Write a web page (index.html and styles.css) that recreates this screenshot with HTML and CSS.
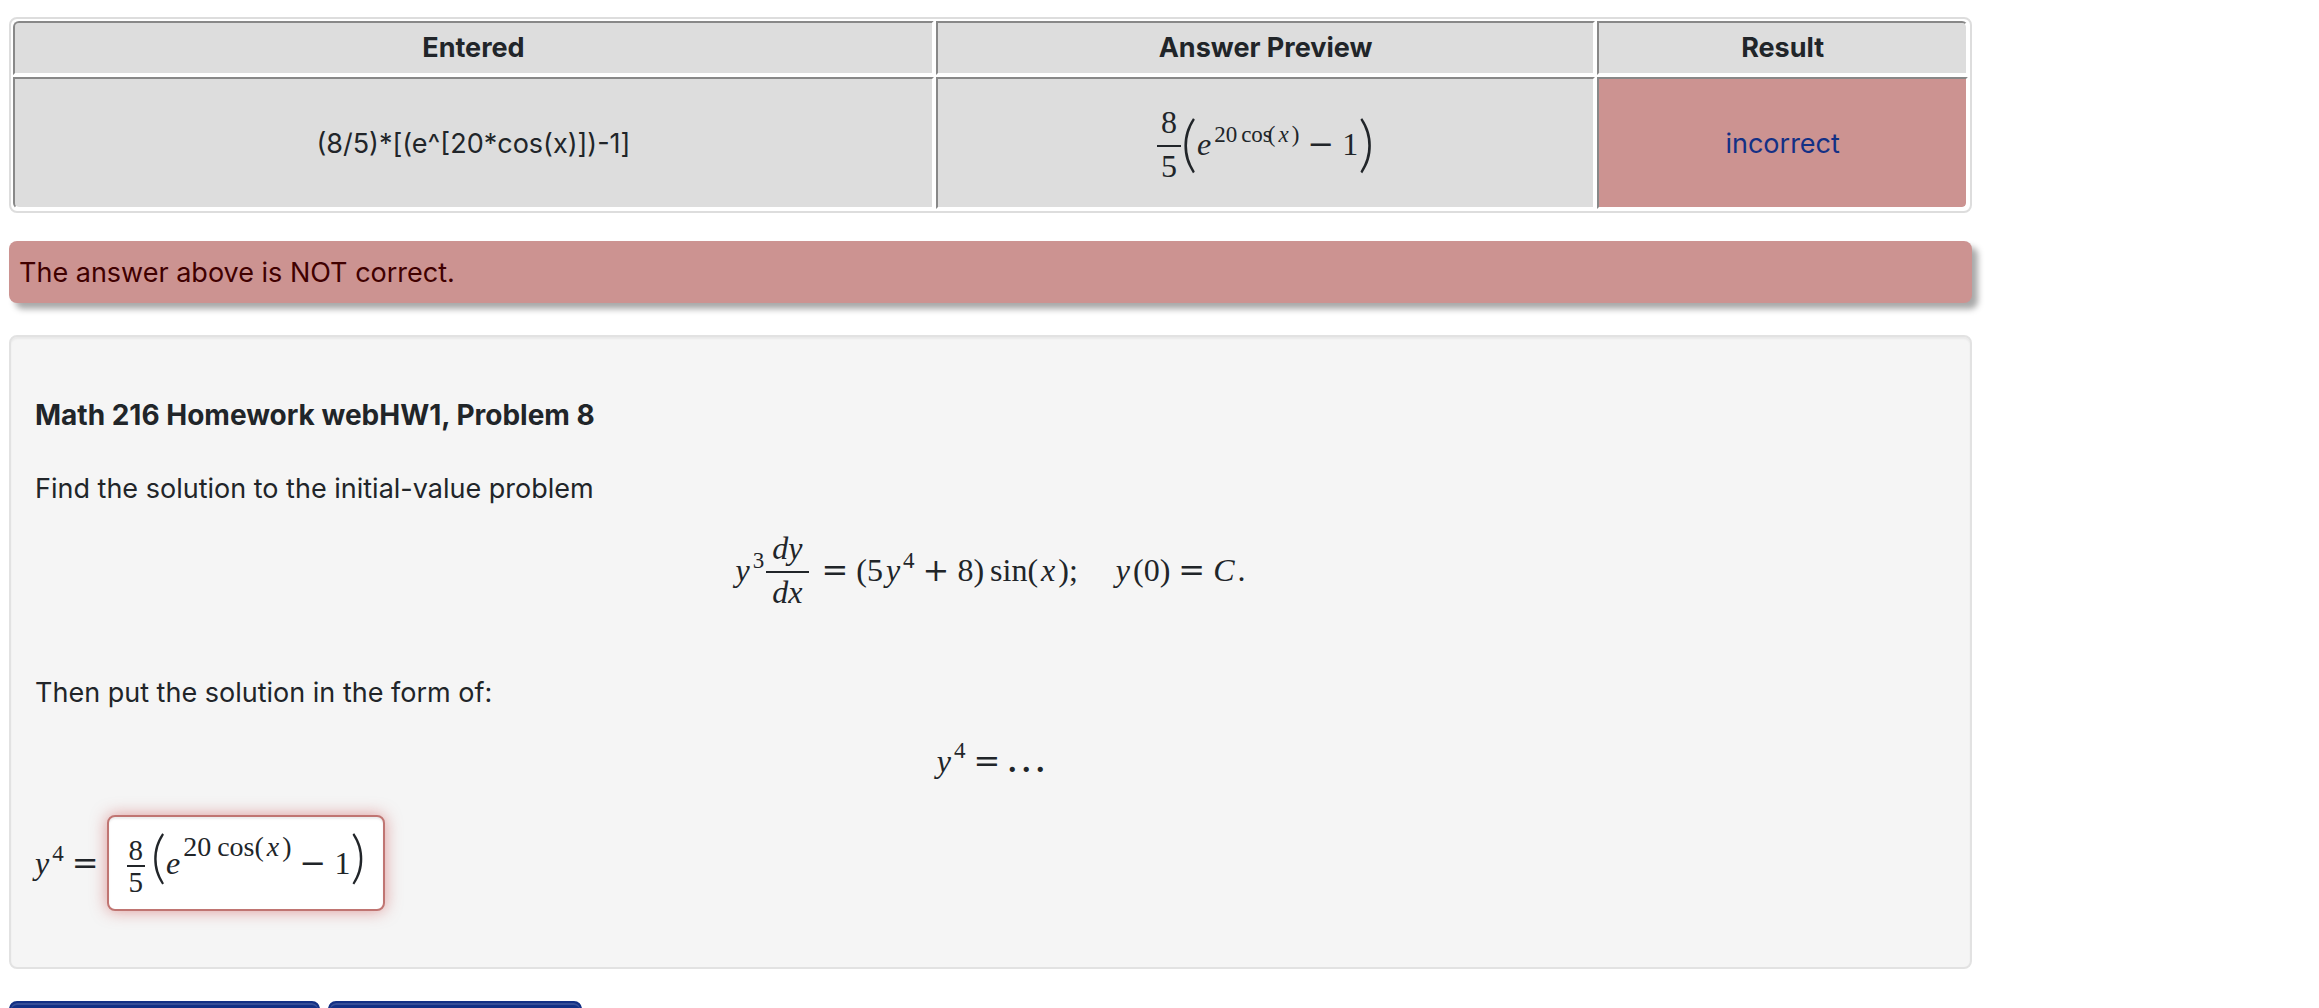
FILE: index.html
```html
<!DOCTYPE html>
<html lang="en">
<head>
  <meta charset="UTF-8">
  <meta name="viewport" content="width=device-width, initial-scale=1.0">
  <title>webHW1, Problem 8</title>
  <link rel="stylesheet" href="styles.css">
</head>
<body>
  <main>
    <table class="results">
      <thead>
        <tr>
          <th class="col-entered">Entered</th>
          <th class="col-preview">Answer Preview</th>
          <th class="col-result">Result</th>
        </tr>
      </thead>
      <tbody>
        <tr>
          <td>(8/5)*[(e^[20*cos(x)])-1]</td>
          <td>
            <span class="math">
              <span class="frac"><span>8</span><span>5</span></span>
              <span class="big">(</span>
              <i>e</i>
              <span class="sup">20</span>
              <span class="sup thin">cos</span>
              <span class="sup overlap">(</span>
              <i class="sup wide">x</i>
              <span class="sup">)</span>
              <span class="op">−</span>
              <span>1</span>
              <span class="big">)</span>
            </span>
          </td>
          <td class="wrong"><a href="#answer">incorrect</a></td>
        </tr>
      </tbody>
    </table>

    <div class="alert">The answer above is NOT correct.</div>

    <form>
      <section class="problem">
        <h1>Math 216 Homework webHW1, Problem 8</h1>
        <p>Find the solution to the initial-value problem</p>

        <div class="display tall">
          <span class="math">
            <i>y</i>
            <span class="sup">3</span>
            <span class="frac deriv"><i>dy</i><i>dx</i></span>
            <span class="op">=</span>
            <span>(</span>
            <span>5</span>
            <i class="wide">y</i>
            <span class="sup">4</span>
            <span class="op">+</span>
            <span>8</span>
            <span>)</span>
            <span class="func">sin</span>
            <span>(</span>
            <i class="wide">x</i>
            <span>)</span>
            <span>;</span>
            <i class="quad">y</i>
            <span>(</span>
            <span>0</span>
            <span>)</span>
            <span class="op">=</span>
            <i>C</i>
            <span>.</span>
          </span>
        </div>

        <p>Then put the solution in the form of:</p>

        <div class="display">
          <span class="math">
            <i>y</i>
            <span class="sup">4</span>
            <span class="op">=</span>
            <span class="dots"><span>.</span><span>.</span><span>.</span></span>
          </span>
        </div>

        <div class="answer-row">
          <label class="math" for="answer">
            <i>y</i>
            <span class="sup">4</span>
            <span class="op">=</span>
          </label>
          <div class="math-field">
            <span class="math">
              <span class="frac small"><span>8</span><span>5</span></span>
              <span class="big">(</span>
              <i>e</i>
              <span class="sup">20</span>
              <span class="sup thin">cos</span>
              <span class="sup">(</span>
              <i class="sup wide">x</i>
              <span class="sup">)</span>
              <span class="op">−</span>
              <span>1</span>
              <span class="big">)</span>
            </span>
            <input id="answer" type="text" autocomplete="off">
          </div>
        </div>
      </section>

      <div class="actions">
        <button class="preview" type="button" aria-label="Preview My Answers"></button>
        <button class="submit" type="submit" aria-label="Submit Answers"></button>
      </div>
    </form>
  </main>
</body>
</html>
```

FILE: styles.css
```css
* {
  box-sizing: border-box;
  margin: 0;
  padding: 0;
}

body {
  height: 100vh;
  overflow: hidden;
  background-color: #fff;
  color: #212529;
  font-family: Inter, "Liberation Sans", sans-serif;
  font-size: 27px;
  line-height: 40px;
}

main {
  padding: 17px 347px 0 9px;
}

/* Results table */
.results {
  width: 100%;
  border: 2px solid #ddd;
  border-radius: 8px;
  border-collapse: separate;
  border-spacing: 2px;
  table-layout: fixed;
  text-align: center;
}

.results th,
.results td {
  border: 2px solid;
  border-color: #888 #fff #fff #888;
  background-color: #ddd;
  background-clip: padding-box;
  padding: 5px;
}

.results td {
  height: 132px;
  padding-top: 7px;
  vertical-align: middle;
}

.results th:first-child {
  border-top-left-radius: 6px;
}

.results th:last-child {
  border-top-right-radius: 6px;
}

.results td:first-child {
  border-bottom-left-radius: 6px;
}

.results td:last-child {
  border-bottom-right-radius: 6px;
}

.col-entered {
  width: 47.2%;
}

.col-preview {
  width: 33.8%;
}

.results .wrong {
  background-color: #cc9391;
}

.wrong a {
  color: #133085;
  text-decoration: none;
}

.alert {
  margin-top: 28px;
  padding: 12px 10px 10px;
  border-radius: 8px;
  background-color: #cc9391;
  color: #400000;
  box-shadow: 6px 6px 6px darkgray;
}

/* Problem panel */
.problem {
  margin-top: 32px;
  padding: 58px 24px 56px;
  border: 2px solid #e2e2e2;
  border-radius: 8px;
  background-color: #f5f5f5;
  box-shadow: inset 0 2px 2px rgba(0, 0, 0, 0.05);
}

.problem h1 {
  margin-bottom: 34px;
  font-size: 28px;
  line-height: 40px;
}

.display {
  display: flex;
  justify-content: center;
  padding: 26px 0 33px;
}

.display.tall {
  padding: 23px 0 65px;
}

.answer-row {
  display: flex;
  align-items: center;
}

/* Formulas */
.math {
  display: inline-flex;
  align-items: center;
  vertical-align: middle;
  font-family: "Liberation Serif", serif;
  font-size: 32px;
  line-height: 32px;
}

.math i {
  padding-right: 3px;
}

.math .sup {
  margin-bottom: 20px;
  font-size: 23px;
  line-height: 23px;
}

.math .thin {
  margin-left: 4px;
}

.math .overlap {
  margin-left: -4px;
}

.math .wide {
  padding: 0 3px;
}

.math .op {
  margin: 0 8px;
  font-family: "DejaVu Serif", serif;
}

.math .func {
  margin-left: 6px;
}

.math .quad {
  margin-left: 38px;
}

.math .big {
  margin-bottom: 6px;
  font-family: Lato, sans-serif;
  font-size: 62px;
  font-weight: 300;
  line-height: 62px;
}

.frac {
  display: flex;
  flex-direction: column;
  align-items: stretch;
  text-align: center;
}

.frac > :first-child {
  padding: 0 4px 7px;
  border-bottom: 2px solid;
}

.frac > :last-child {
  padding: 3px 4px 0;
}

.math .deriv {
  margin: 0 4px 0 2px;
}

.math .deriv > i {
  padding-right: 7px;
  padding-left: 6px;
}

.dots {
  display: flex;
  gap: 6px;
  font-weight: bold;
}

/* Editable answer */
.math-field {
  position: relative;
  display: flex;
  align-items: center;
  height: 96px;
  padding: 0 18px;
  border: 2px solid #c07572;
  border-radius: 8px;
  background-color: #fff;
  box-shadow: inset 0 2px 2px rgba(0, 0, 0, 0.08), 0 0 16px rgba(200, 60, 60, 0.5);
}

.math-field input {
  position: absolute;
  inset: 0;
  width: 100%;
  border: none;
  outline: none;
  background: none;
  font-size: 27px;
}

.math-field .small {
  margin: 6px 6px 0 0;
  font-size: 29px;
  line-height: 29px;
}

.math-field .small > :first-child {
  padding: 0 2px;
}

.math-field .small > :last-child {
  padding: 1px 2px 0;
}

.math-field .sup {
  margin-bottom: 33px;
  font-size: 28px;
  line-height: 28px;
}

.math-field .thin {
  margin-left: 6px;
}

.math-field .big {
  margin-bottom: 16px;
  font-size: 58px;
  line-height: 58px;
}

/* Buttons */
.actions {
  display: flex;
  gap: 8px;
  margin-top: 32px;
}

.actions button {
  height: 64px;
  border: 2px solid #133085;
  border-radius: 8px;
  background-color: #133085;
  box-shadow: inset 0 2px 0 rgba(255, 255, 255, 0.15);
}

.actions .preview {
  width: 311px;
}

.actions .submit {
  width: 254px;
}
```
